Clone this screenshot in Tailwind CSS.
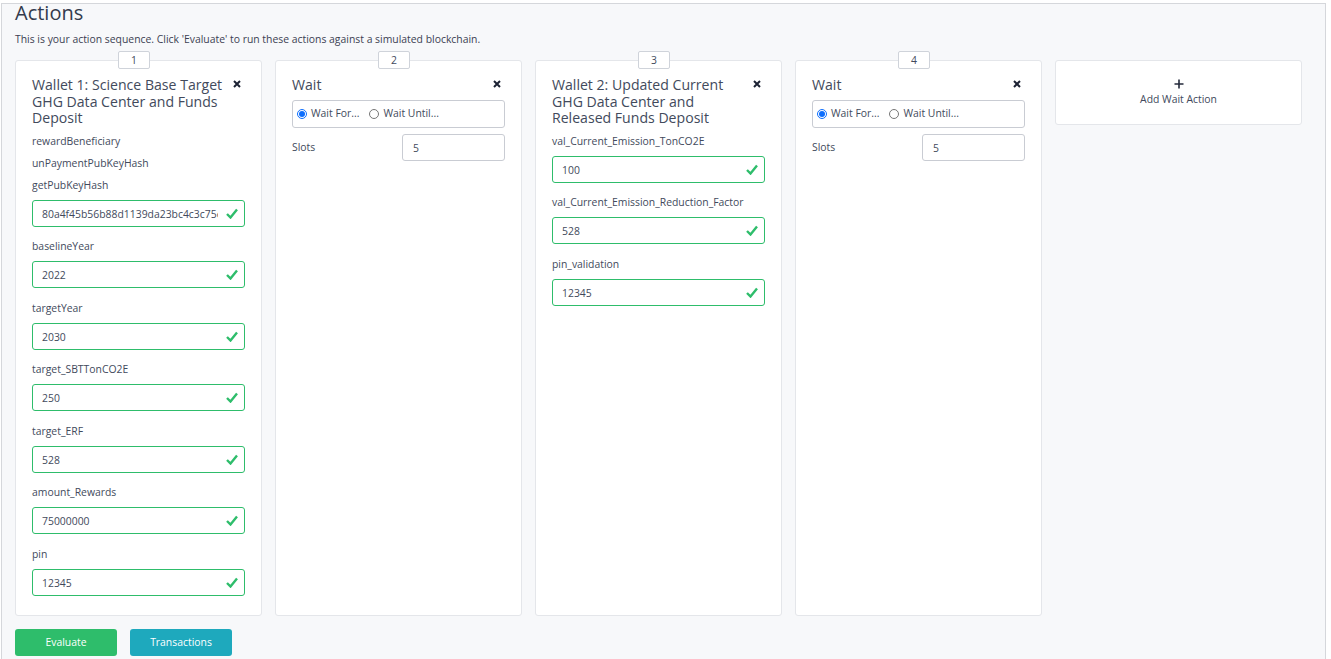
<!DOCTYPE html>
<html lang="en">
<head>
    <meta charset="UTF-8">
    <title>Actions</title>
    <script src="https://cdn.jsdelivr.net/npm/@tailwindcss/browser@4"></script>
</head>
<body class="bg-white h-[659px] overflow-hidden font-['Open_Sans',sans-serif] text-[#424a5c]">
    <main class="mt-[3px] ml-px w-[1325px] h-[656px] bg-[#f7f8fa] border-t border-x border-[#d5d7db] pl-[13px]">
        <h2 class="text-[20px] leading-[17px] text-[#333b4d]">Actions</h2>
        <p class="mt-[11px] text-[10.4px] leading-[14px] text-[#3c3f52]">This is your action sequence. Click 'Evaluate' to run these actions against a simulated blockchain.</p>

        <div class="flex items-start gap-[13px] mt-[14px]">
            <!-- 1 -->
            <section class="relative w-[247px] h-[556px] bg-white border border-[#e4e6ea] rounded-[3px] px-4 pt-4">
                <span class="absolute -top-[10px] left-[102px] w-8 h-[18px] bg-white border border-[#cfd3da] rounded-[2px] text-[10.4px] leading-[16px] text-center">1</span>
                <button class="absolute top-[18px] right-[19px]"><svg width="10" height="10" viewBox="0 0 10 10"><path d="M2 2l6 6M8 2l-6 6" stroke="#1c2233" stroke-width="2"/></svg></button>
                <h3 class="w-[196px] text-[14.1px] leading-[16.5px] mb-[6px]">Wallet 1: Science Base Target GHG Data Center and Funds Deposit</h3>
                <p class="text-[10.4px] leading-4 mb-[6px]">rewardBeneficiary</p>
                <p class="text-[10.4px] leading-4 mb-[6px]">unPaymentPubKeyHash</p>
                <p class="text-[10.4px] leading-4 mb-[7px]">getPubKeyHash</p>
                <div class="relative mb-[11.5px]">
                    <input readonly value="80a4f45b56b88d1139da23bc4c3c75e0f8a1" class="block w-[213px] h-[27px] pl-[9px] pr-[26px] pt-px bg-white border border-[#2ebd6b] rounded-[3px] text-[10.4px] text-[#424a5c] outline-none">
                    <svg class="absolute top-[8px] right-[7px]" width="12" height="11" viewBox="0 0 12 11"><path d="M1 6l3.5 3.5L11 1.5" fill="none" stroke="#2ebd6b" stroke-width="2.4"/></svg>
                </div>
                <p class="text-[10.4px] leading-4 mb-[7px]">baselineYear</p>
                <div class="relative mb-[11.5px]">
                    <input readonly value="2022" class="block w-[213px] h-[27px] pl-[9px] pr-[26px] pt-px bg-white border border-[#2ebd6b] rounded-[3px] text-[10.4px] text-[#424a5c] outline-none">
                    <svg class="absolute top-[8px] right-[7px]" width="12" height="11" viewBox="0 0 12 11"><path d="M1 6l3.5 3.5L11 1.5" fill="none" stroke="#2ebd6b" stroke-width="2.4"/></svg>
                </div>
                <p class="text-[10.4px] leading-4 mb-[7px]">targetYear</p>
                <div class="relative mb-[11.5px]">
                    <input readonly value="2030" class="block w-[213px] h-[27px] pl-[9px] pr-[26px] pt-px bg-white border border-[#2ebd6b] rounded-[3px] text-[10.4px] text-[#424a5c] outline-none">
                    <svg class="absolute top-[8px] right-[7px]" width="12" height="11" viewBox="0 0 12 11"><path d="M1 6l3.5 3.5L11 1.5" fill="none" stroke="#2ebd6b" stroke-width="2.4"/></svg>
                </div>
                <p class="text-[10.4px] leading-4 mb-[7px]">target_SBTTonCO2E</p>
                <div class="relative mb-[11.5px]">
                    <input readonly value="250" class="block w-[213px] h-[27px] pl-[9px] pr-[26px] pt-px bg-white border border-[#2ebd6b] rounded-[3px] text-[10.4px] text-[#424a5c] outline-none">
                    <svg class="absolute top-[8px] right-[7px]" width="12" height="11" viewBox="0 0 12 11"><path d="M1 6l3.5 3.5L11 1.5" fill="none" stroke="#2ebd6b" stroke-width="2.4"/></svg>
                </div>
                <p class="text-[10.4px] leading-4 mb-[7px]">target_ERF</p>
                <div class="relative mb-[11.5px]">
                    <input readonly value="528" class="block w-[213px] h-[27px] pl-[9px] pr-[26px] pt-px bg-white border border-[#2ebd6b] rounded-[3px] text-[10.4px] text-[#424a5c] outline-none">
                    <svg class="absolute top-[8px] right-[7px]" width="12" height="11" viewBox="0 0 12 11"><path d="M1 6l3.5 3.5L11 1.5" fill="none" stroke="#2ebd6b" stroke-width="2.4"/></svg>
                </div>
                <p class="text-[10.4px] leading-4 mb-[7px]">amount_Rewards</p>
                <div class="relative mb-[11.5px]">
                    <input readonly value="75000000" class="block w-[213px] h-[27px] pl-[9px] pr-[26px] pt-px bg-white border border-[#2ebd6b] rounded-[3px] text-[10.4px] text-[#424a5c] outline-none">
                    <svg class="absolute top-[8px] right-[7px]" width="12" height="11" viewBox="0 0 12 11"><path d="M1 6l3.5 3.5L11 1.5" fill="none" stroke="#2ebd6b" stroke-width="2.4"/></svg>
                </div>
                <p class="text-[10.4px] leading-4 mb-[7px]">pin</p>
                <div class="relative">
                    <input readonly value="12345" class="block w-[213px] h-[27px] pl-[9px] pr-[26px] pt-px bg-white border border-[#2ebd6b] rounded-[3px] text-[10.4px] text-[#424a5c] outline-none">
                    <svg class="absolute top-[8px] right-[7px]" width="12" height="11" viewBox="0 0 12 11"><path d="M1 6l3.5 3.5L11 1.5" fill="none" stroke="#2ebd6b" stroke-width="2.4"/></svg>
                </div>
            </section>

            <!-- 2 -->
            <section class="relative w-[247px] h-[556px] bg-white border border-[#e4e6ea] rounded-[3px] px-4 pt-4">
                <span class="absolute -top-[10px] left-[102px] w-8 h-[18px] bg-white border border-[#cfd3da] rounded-[2px] text-[10.4px] leading-[16px] text-center">2</span>
                <button class="absolute top-[18px] right-[19px]"><svg width="10" height="10" viewBox="0 0 10 10"><path d="M2 2l6 6M8 2l-6 6" stroke="#1c2233" stroke-width="2"/></svg></button>
                <h3 class="text-[14.1px] leading-[16.5px] mb-[6px]">Wait</h3>
                <div class="flex items-center w-[213px] h-[28px] border border-[#c9ccd3] rounded-[3px] pl-[4px] text-[10.4px]">
                    <span class="w-[10px] h-[10px] rounded-full border border-[#0d6efd] bg-white flex items-center justify-center"><span class="w-[6px] h-[6px] rounded-full bg-[#0d6efd]"></span></span>
                    <span class="ml-[4px]">Wait For...</span>
                    <span class="ml-[10px] w-[10px] h-[10px] rounded-full border border-[#767676] bg-white"></span>
                    <span class="ml-[4px]">Wait Until...</span>
                </div>
                <div class="flex items-start justify-between mt-[6px]">
                    <span class="text-[10.4px] leading-4 mt-[5px]">Slots</span>
                    <input readonly value="5" class="block w-[103px] h-[27px] pl-[10px] pt-px bg-white border border-[#c9ccd3] rounded-[3px] text-[10.4px] text-[#424a5c] outline-none">
                </div>
            </section>

            <!-- 3 -->
            <section class="relative w-[247px] h-[556px] bg-white border border-[#e4e6ea] rounded-[3px] px-4 pt-4">
                <span class="absolute -top-[10px] left-[102px] w-8 h-[18px] bg-white border border-[#cfd3da] rounded-[2px] text-[10.4px] leading-[16px] text-center">3</span>
                <button class="absolute top-[18px] right-[19px]"><svg width="10" height="10" viewBox="0 0 10 10"><path d="M2 2l6 6M8 2l-6 6" stroke="#1c2233" stroke-width="2"/></svg></button>
                <h3 class="w-[196px] text-[14.1px] leading-[16.5px] mb-[6px]">Wallet 2: Updated Current GHG Data Center and Released Funds Deposit</h3>
                <p class="text-[10.4px] leading-4 mb-[7px]">val_Current_Emission_TonCO2E</p>
                <div class="relative mb-[11.5px]">
                    <input readonly value="100" class="block w-[213px] h-[27px] pl-[9px] pr-[26px] pt-px bg-white border border-[#2ebd6b] rounded-[3px] text-[10.4px] text-[#424a5c] outline-none">
                    <svg class="absolute top-[8px] right-[7px]" width="12" height="11" viewBox="0 0 12 11"><path d="M1 6l3.5 3.5L11 1.5" fill="none" stroke="#2ebd6b" stroke-width="2.4"/></svg>
                </div>
                <p class="text-[10.4px] leading-4 mb-[7px]">val_Current_Emission_Reduction_Factor</p>
                <div class="relative mb-[11.5px]">
                    <input readonly value="528" class="block w-[213px] h-[27px] pl-[9px] pr-[26px] pt-px bg-white border border-[#2ebd6b] rounded-[3px] text-[10.4px] text-[#424a5c] outline-none">
                    <svg class="absolute top-[8px] right-[7px]" width="12" height="11" viewBox="0 0 12 11"><path d="M1 6l3.5 3.5L11 1.5" fill="none" stroke="#2ebd6b" stroke-width="2.4"/></svg>
                </div>
                <p class="text-[10.4px] leading-4 mb-[7px]">pin_validation</p>
                <div class="relative">
                    <input readonly value="12345" class="block w-[213px] h-[27px] pl-[9px] pr-[26px] pt-px bg-white border border-[#2ebd6b] rounded-[3px] text-[10.4px] text-[#424a5c] outline-none">
                    <svg class="absolute top-[8px] right-[7px]" width="12" height="11" viewBox="0 0 12 11"><path d="M1 6l3.5 3.5L11 1.5" fill="none" stroke="#2ebd6b" stroke-width="2.4"/></svg>
                </div>
            </section>

            <!-- 4 -->
            <section class="relative w-[247px] h-[556px] bg-white border border-[#e4e6ea] rounded-[3px] px-4 pt-4">
                <span class="absolute -top-[10px] left-[102px] w-8 h-[18px] bg-white border border-[#cfd3da] rounded-[2px] text-[10.4px] leading-[16px] text-center">4</span>
                <button class="absolute top-[18px] right-[19px]"><svg width="10" height="10" viewBox="0 0 10 10"><path d="M2 2l6 6M8 2l-6 6" stroke="#1c2233" stroke-width="2"/></svg></button>
                <h3 class="text-[14.1px] leading-[16.5px] mb-[6px]">Wait</h3>
                <div class="flex items-center w-[213px] h-[28px] border border-[#c9ccd3] rounded-[3px] pl-[4px] text-[10.4px]">
                    <span class="w-[10px] h-[10px] rounded-full border border-[#0d6efd] bg-white flex items-center justify-center"><span class="w-[6px] h-[6px] rounded-full bg-[#0d6efd]"></span></span>
                    <span class="ml-[4px]">Wait For...</span>
                    <span class="ml-[10px] w-[10px] h-[10px] rounded-full border border-[#767676] bg-white"></span>
                    <span class="ml-[4px]">Wait Until...</span>
                </div>
                <div class="flex items-start justify-between mt-[6px]">
                    <span class="text-[10.4px] leading-4 mt-[5px]">Slots</span>
                    <input readonly value="5" class="block w-[103px] h-[27px] pl-[10px] pt-px bg-white border border-[#c9ccd3] rounded-[3px] text-[10.4px] text-[#424a5c] outline-none">
                </div>
            </section>

            <!-- add -->
            <section class="w-[247px] h-[65px] bg-white border border-[#e4e6ea] rounded-[3px] flex flex-col items-center pt-[18px]">
                <svg width="10" height="10" viewBox="0 0 10 10"><path d="M5 0.5v9M0.5 5h9" stroke="#242a3b" stroke-width="1.6"/></svg>
                <span class="text-[10.4px] leading-[14px] mt-[3px]">Add Wait Action</span>
            </section>
        </div>

        <div class="flex gap-[13px] mt-[13px]">
            <button class="w-[102px] h-[27px] bg-[#2ebd6b] rounded-[3px] text-[10.4px] text-white">Evaluate</button>
            <button class="w-[102px] h-[27px] bg-[#1ea9bd] rounded-[3px] text-[10.4px] text-white">Transactions</button>
        </div>
    </main>
</body>
</html>
